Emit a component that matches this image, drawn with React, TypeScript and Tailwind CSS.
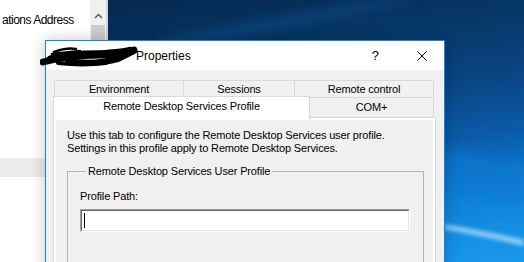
import React from 'react';

function Scribble() {
  // redaction marker over the user name in the title bar
  return (
    <svg
      className="absolute left-[40px] top-[46px]"
      width="98"
      height="22"
      viewBox="0 0 98 22"
      fill="none"
      stroke="#000"
      strokeLinecap="round"
      strokeLinejoin="round"
    >
      <path d="M3 16 C20 11 40 9 60 9 C72 9 84 8 94 4" strokeWidth="7" />
      <path d="M10 12 C25 8 45 6 70 7 L93 4" strokeWidth="5" />
      <path d="M14 6 C22 3 30 2 36 3" strokeWidth="2.5" />
      <path d="M12 8 L40 5" strokeWidth="2.5" />
      <path d="M28 15 C45 18 62 17 78 13 L94 5" strokeWidth="6" />
      <path d="M18 17 C35 19 50 19 66 17" strokeWidth="4" />
      <path d="M60 6 C70 4 80 5 90 2" strokeWidth="2.5" />
    </svg>
  );
}

function Desktop() {
  return (
    <div className="absolute inset-0 bg-[linear-gradient(172deg,#05244a_0%,#073766_25%,#0a4686_45%,#0b5aa8_60%,#0e7bd2_75%,#148fe4_90%,#1a98ec_100%)]">
      <svg className="absolute inset-0" width="524" height="262" viewBox="0 0 524 262">
        <defs>
          <filter id="blur6">
            <feGaussianBlur stdDeviation="6" />
          </filter>
          <filter id="blur2">
            <feGaussianBlur stdDeviation="2" />
          </filter>
        </defs>
        <path d="M150 42 L380 0 L420 0 L170 48 Z" fill="#1a5ea6" opacity="0.45" filter="url(#blur6)" />
        <path d="M444 150 L524 165 L524 200 L444 185 Z" fill="#0f78d0" opacity="0.6" filter="url(#blur6)" />
        <path d="M444 224 C470 229 500 234 524 240 L524 246 C500 240 470 234 444 229 Z" fill="#a9dcfb" opacity="0.85" filter="url(#blur2)" />
      </svg>
    </div>
  );
}

function BackWindow() {
  return (
    <div className="absolute left-0 top-0 flex h-[262px] w-[108px] border-r-2 border-[#d4d4d4] bg-white">
      <div className="relative flex-1">
        <div className="pl-[2px] pt-[13px] text-[12px] leading-[14px] tracking-[-0.5px] text-black">
          ations Address
        </div>
        <div className="mt-[131px] h-[19px] bg-[#ebebeb]" />
      </div>
      <div className="flex w-[16px] flex-col items-center bg-[#f0f0f0]">
        <svg className="mt-[13px]" width="9" height="6" viewBox="0 0 9 6" fill="none" stroke="#606060" strokeWidth="1.5">
          <path d="M1 5 L4.5 1.5 L8 5" />
        </svg>
        <div className="mt-[6px] h-[120px] w-[14px] bg-[#cdcdcd]" />
      </div>
    </div>
  );
}

function Tab({ label, className }: { label: string; className: string }) {
  return (
    <div className={`flex items-center justify-center border border-[#d9d9d9] text-[11px] leading-[13px] tracking-[-0.15px] text-black ${className}`}>
      {label}
    </div>
  );
}

function Dialog() {
  return (
    <div className="absolute left-[45px] top-[40px] flex h-[240px] w-[400px] flex-col border border-[#1883d7] bg-[#f0f0f0] shadow-[0_0_14px_rgba(0,0,0,0.22)]">
      {/* title bar */}
      <div className="flex h-[29px] items-center bg-white text-[12px] text-black">
        <span className="pl-[90px] pt-[1px]">Properties</span>
        <span className="ml-auto mr-[38px] pt-[1px] text-[13px]">?</span>
        <svg className="mr-[17px]" width="10" height="10" viewBox="0 0 10 10" stroke="#000" strokeWidth="1">
          <path d="M0.5 0.5 L9.5 9.5 M9.5 0.5 L0.5 9.5" />
        </svg>
      </div>

      {/* tabs */}
      <div className="pl-[7px] pt-[10px]">
        <div className="ml-[1px] flex h-[18px]">
          <Tab label="Environment" className="w-[130px] bg-[#f0f0f0]" />
          <Tab label="Sessions" className="-ml-px w-[112px] bg-[#f0f0f0]" />
          <Tab label="Remote control" className="-ml-px w-[140px] bg-[#f0f0f0]" />
        </div>
        <div className="-mt-[2px] flex h-[21px] items-start">
          <div className="relative z-10 flex h-[23px] w-[257px] justify-center border border-b-0 border-[#d9d9d9] bg-white pt-[3px] text-[11px] leading-[13px] tracking-[-0.15px] text-black">
            Remote Desktop Services Profile
          </div>
          <Tab label="COM+" className="-ml-px mt-px h-[20px] w-[125px] border-b-0 bg-[#f0f0f0]" />
        </div>

        {/* panel */}
        <div className="h-[160px] w-[383px] border border-[#d9d9d9] bg-white p-[2px]">
          <div className="h-full bg-[#f0f0f0] pl-[11px] pt-[9px] text-[11px] leading-[13px] tracking-[-0.15px] text-black">
            <p>Use this tab to configure the Remote Desktop Services user profile.</p>
            <p>Settings in this profile apply to Remote Desktop Services.</p>

            <fieldset className="mt-[10px] h-[120px] w-[357px] border border-[#b4b4b4] pl-[12px]">
              <legend className="ml-[6px] px-[2px] text-[11px] leading-[13px]">
                Remote Desktop Services User Profile
              </legend>
              <div className="pt-[12px]">Profile Path:</div>
              <div className="mt-[6px] h-[23px] w-[330px] border border-b-white border-l-[#a0a0a0] border-r-white border-t-[#a0a0a0]">
                <div className="flex h-full items-center border border-b-[#e3e3e3] border-l-[#696969] border-r-[#e3e3e3] border-t-[#696969] bg-white pl-[2px]">
                  <div className="h-[15px] w-px bg-black" />
                </div>
              </div>
            </fieldset>
          </div>
        </div>
      </div>
    </div>
  );
}

export default function App() {
  return (
    <div className="relative h-[262px] w-[524px] overflow-hidden font-['Liberation_Sans',Arial,sans-serif]">
      <Desktop />
      <BackWindow />
      <Dialog />
      <Scribble />
    </div>
  );
}
